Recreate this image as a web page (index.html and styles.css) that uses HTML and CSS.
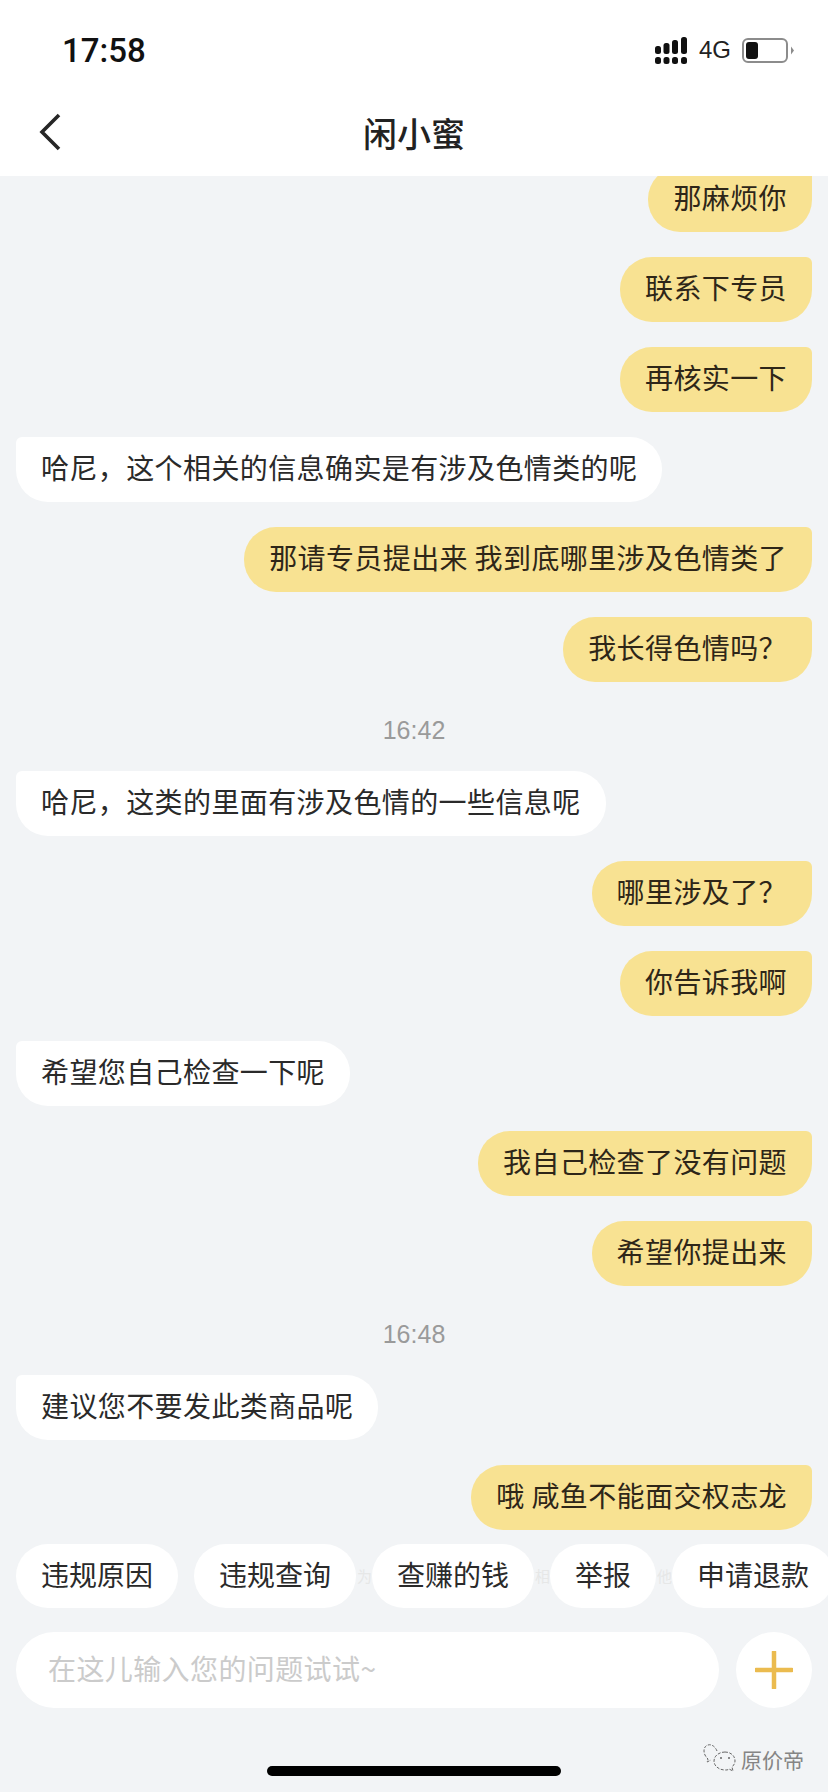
FILE: index.html
```html
<!doctype html>
<html>
<head>
	<meta charset="utf-8">
	<title>闲小蜜</title>
	<link rel="stylesheet" href="styles.css">
</head>
<body>
	<div class="screen">
		<!-- 状态栏 -->
		<div class="status">
			<span class="clock">17:58</span>
			<div class="status-right">
				<svg class="signal" width="32" height="27" viewBox="0 0 32 27">
					<rect x="0" y="9" width="6" height="8" rx="2.5"/>
					<rect x="8.500" y="6" width="6" height="11" rx="2.500"/>
					<rect x="17" y="3" width="6" height="14" rx="2.500"/>
					<rect x="26" y="0" width="6" height="17" rx="2.500"/>
					<rect x="0" y="20" width="6" height="7" rx="2.500"/>
					<rect x="8.500" y="20" width="6" height="7" rx="2.500"/>
					<rect x="17" y="20" width="6" height="7" rx="2.500"/>
					<rect x="26" y="20" width="6" height="7" rx="2.500"/>
				</svg>
				<span class="net">4G</span>
				<svg class="battery" width="52" height="25" viewBox="0 0 52 25">
					<rect x="1" y="1" width="44" height="23" rx="5" fill="none" stroke="#8c8c8c" stroke-width="2"/>
					<rect x="4" y="4" width="12" height="17" rx="3" fill="#111"/>
					<path d="M49 8.500l3 4-3 4z" fill="#8c8c8c"/>
				</svg>
			</div>
		</div>
		<!-- 标题栏 -->
		<div class="nav">
			<svg class="back" width="24" height="38" viewBox="0 0 24 38">
				<path d="M21 2L4 19l17 17" fill="none" stroke="#262626" stroke-width="3.600"/>
			</svg>
			<span class="title">闲小蜜</span>
		</div>
		<!-- 聊天内容 -->
		<div class="chat">
			<div class="msg me first">那麻烦你</div>
			<div class="msg me">联系下专员</div>
			<div class="msg me">再核实一下</div>
			<div class="msg you">哈尼，这个相关的信息确实是有涉及色情类的呢</div>
			<div class="msg me">那请专员提出来 我到底哪里涉及色情类了</div>
			<div class="msg me">我长得色情吗？</div>
			<div class="time">16:42</div>
			<div class="msg you">哈尼，这类的里面有涉及色情的一些信息呢</div>
			<div class="msg me">哪里涉及了？</div>
			<div class="msg me">你告诉我啊</div>
			<div class="msg you">希望您自己检查一下呢</div>
			<div class="msg me">我自己检查了没有问题</div>
			<div class="msg me">希望你提出来</div>
			<div class="time">16:48</div>
			<div class="msg you">建议您不要发此类商品呢</div>
			<div class="msg me">哦 咸鱼不能面交权志龙</div>
		</div>
		<!-- 快捷入口 -->
		<div class="chips">
			<!-- 按钮缝隙里透出的下层文字 -->
			<span class="ghost ghost-a">为</span>
			<span class="ghost ghost-b">相</span>
			<span class="ghost ghost-c">他</span>
			<span class="chip">违规原因</span>
			<span class="chip">违规查询</span>
			<span class="chip">查赚的钱</span>
			<span class="chip">举报</span>
			<span class="chip">申请退款</span>
		</div>
		<!-- 输入框 -->
		<div class="input-row">
			<div class="input">在这儿输入您的问题试试~</div>
			<div class="plus">
				<svg width="38" height="38" viewBox="0 0 38 38">
					<path d="M19 1v36M1 19h36" fill="none" stroke="#ebbb4f" stroke-width="4.500" stroke-linecap="round"/>
				</svg>
			</div>
		</div>
		<div class="home"></div>
		<!-- 水印 -->
		<div class="mark">
			<svg width="34" height="30" viewBox="0 0 34 30">
				<g fill="none" stroke="#666" stroke-width="1" stroke-dasharray="3 1.500">
					<path d="M14 8C12 3 8 1 5 2 1 3 0 8 2 12c1 2 2 3 3 4l-1 3 4-2"/>
					<path d="M22 9c-6 0-11 4-11 9s5 9 11 9c2 0 3 0 4-1l4 2-1-4c2-2 3-4 3-6 0-5-4-9-10-9z"/>
				</g>
				<circle cx="18" cy="15" r="1" fill="#666"/>
				<circle cx="26" cy="15" r="1" fill="#666"/>
			</svg>
			<span>原价帝</span>
		</div>
	</div>
</body>
</html>
```

FILE: styles.css
```css
*{box-sizing:border-box;}
html,body{margin:0;padding:0;}
body{font-family:"Noto Sans CJK SC","Liberation Sans",sans-serif;color:#222;}
.screen{
	width:828px;
	height:1792px;
	background-color:#f2f4f6;
	position:relative;
	overflow:hidden;
	display:flex;
	flex-direction:column;
}
/* 状态栏 */
.status{
	height:88px;
	padding:12px 34px 0 62px;
	background-color:#fff;
	display:flex;
	align-items:center;
	justify-content:space-between;
}
.clock{
	font-family:Roboto,"Liberation Sans",sans-serif;
	font-size:33px;
	font-weight:500;
	color:#111;
}
.status-right{
	display:flex;
	align-items:center;
}
.signal{fill:#111;}
.net{
	font-family:"Liberation Sans",sans-serif;
	font-size:24px;
	color:#222;
	margin:0 11px 0 12px;
}
/* 标题栏 */
.nav{
	height:88px;
	background-color:#fff;
	display:flex;
	align-items:center;
	justify-content:center;
	position:relative;
}
.back{
	position:absolute;
	left:38px;
	top:25px;
}
.title{
	font-size:34px;
	font-weight:500;
	color:#222;
}
/* 聊天内容 */
.chat{
	flex:1;
	min-height:0;
	padding:0 16px;
	overflow:hidden;
	display:flex;
	flex-direction:column;
	align-items:flex-start;
	gap:25px;
}
.msg{
	height:65px;
	line-height:61px;
	padding:0 25px;
	font-size:28px;
	letter-spacing:0.4px;
	white-space:nowrap;
	flex-shrink:0;
}
.msg.first{margin-top:-9px;}
.msg.me{
	align-self:flex-end;
	background-color:#f8e292;
	color:#2e2618;
	border-radius:32px 6px 32px 32px;
}
.msg.you{
	background-color:#fff;
	color:#2a2a2a;
	border-radius:6px 32px 32px 32px;
}
.time{
	align-self:center;
	height:39px;
	padding-top:7px;
	line-height:32px;
	font-family:"Liberation Sans",sans-serif;
	font-size:25px;
	color:#9a9a9a;
	flex-shrink:0;
}
/* 快捷入口 */
.chips{
	height:64px;
	padding-left:16px;
	display:flex;
	gap:16px;
	position:relative;
	flex-shrink:0;
}
.ghost{
	position:absolute;
	top:20px;
	font-size:15px;
	line-height:24px;
	color:#e6e7e7;
}
.ghost-a{left:357px;}
.ghost-b{left:535px;}
.ghost-c{left:657px;}
.chip{
	height:64px;
	line-height:60px;
	padding:0 25px;
	background-color:#fff;
	border-radius:32px;
	font-size:28px;
	color:#2a2a2a;
	white-space:nowrap;
	flex-shrink:0;
	position:relative;
}
/* 输入框 */
.input-row{
	margin-top:24px;
	padding:0 16px;
	display:flex;
	gap:17px;
	flex-shrink:0;
}
.input{
	width:703px;
	height:76px;
	line-height:72px;
	padding-left:32px;
	background-color:#fff;
	border-radius:38px;
	font-size:28px;
	letter-spacing:0.4px;
	color:#cbcbcb;
}
.plus{
	width:76px;
	height:76px;
	background-color:#fff;
	border-radius:50%;
	display:flex;
	align-items:center;
	justify-content:center;
}
.plus svg{display:block;}
.home{
	width:294px;
	height:10px;
	margin:58px auto 16px;
	background-color:#000;
	border-radius:5px;
	flex-shrink:0;
}
/* 水印 */
.mark{
	position:absolute;
	left:703px;
	top:1743px;
	display:flex;
	align-items:center;
	gap:4px;
	font-size:21px;
	color:#858585;
}
.mark span{position:relative;top:1px;}
```
